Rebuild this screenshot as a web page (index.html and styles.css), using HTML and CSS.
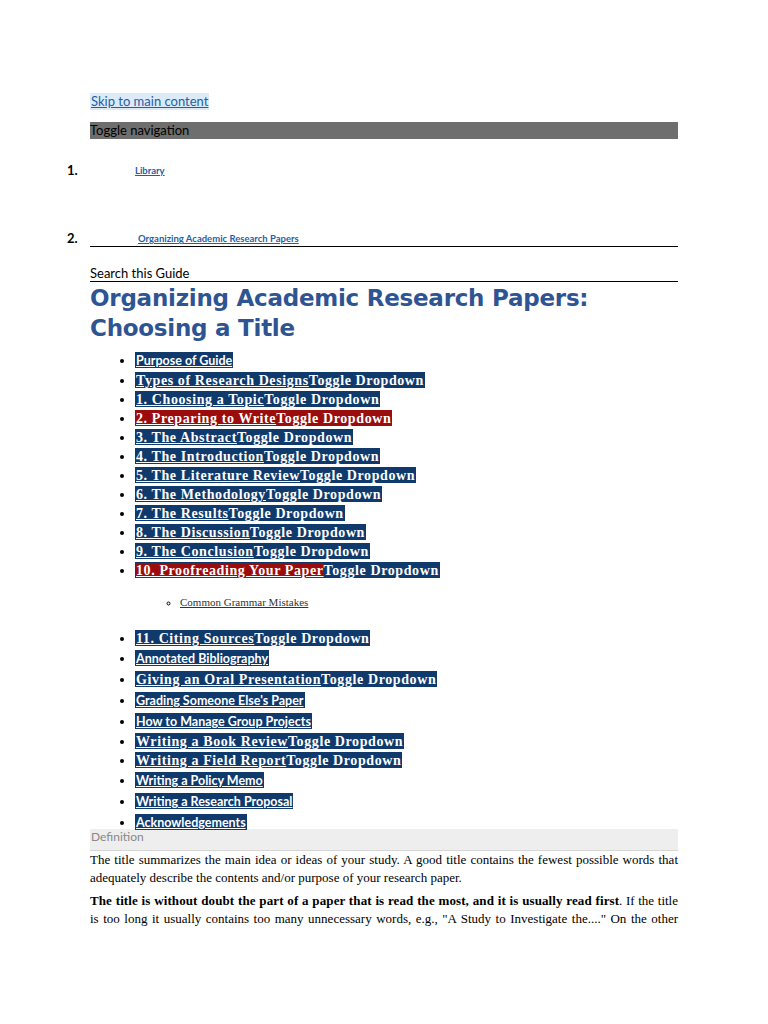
FILE: index.html
```html
<!DOCTYPE html>
<html lang="en">
<head>
    <meta charset="UTF-8">
    <title>Organizing Academic Research Papers: Choosing a Title</title>
    <link rel="stylesheet" href="styles.css">
</head>
<body>
    <div class="page">
        <a class="skip-link" href="#main">Skip to main content</a>

        <div class="toggle-nav">Toggle navigation</div>

        <ol class="breadcrumb">
            <li><a href="#">Library</a></li>
            <li><a href="#">Organizing Academic Research Papers</a></li>
        </ol>

        <div class="search-guide">Search this Guide</div>

        <h1>Organizing Academic Research Papers: Choosing a Title</h1>

        <ul class="guide-nav">
            <li class="sans"><span class="hl"><a href="#">Purpose of Guide</a></span></li>
            <li><span class="hl"><a href="#">Types of Research Designs</a>Toggle Dropdown</span></li>
            <li><span class="hl"><a href="#">1. Choosing a Topic</a>Toggle Dropdown</span></li>
            <li class="active"><span class="hl"><a href="#">2. Preparing to Write</a>Toggle Dropdown</span></li>
            <li><span class="hl"><a href="#">3. The Abstract</a>Toggle Dropdown</span></li>
            <li><span class="hl"><a href="#">4. The Introduction</a>Toggle Dropdown</span></li>
            <li><span class="hl"><a href="#">5. The Literature Review</a>Toggle Dropdown</span></li>
            <li><span class="hl"><a href="#">6. The Methodology</a>Toggle Dropdown</span></li>
            <li><span class="hl"><a href="#">7. The Results</a>Toggle Dropdown</span></li>
            <li><span class="hl"><a href="#">8. The Discussion</a>Toggle Dropdown</span></li>
            <li><span class="hl"><a href="#">9. The Conclusion</a>Toggle Dropdown</span></li>
            <li class="current">
                <span class="hl"><a class="red" href="#">10. Proofreading Your Paper</a>Toggle Dropdown</span>
                <ul class="sub-nav">
                    <li><a href="#">Common Grammar Mistakes</a></li>
                </ul>
            </li>
            <li><span class="hl"><a href="#">11. Citing Sources</a>Toggle Dropdown</span></li>
            <li class="sans"><span class="hl"><a href="#">Annotated Bibliography</a></span></li>
            <li class="tall"><span class="hl"><a href="#">Giving an Oral Presentation</a>Toggle Dropdown</span></li>
            <li class="sans"><span class="hl"><a href="#">Grading Someone Else's Paper</a></span></li>
            <li class="sans"><span class="hl"><a href="#">How to Manage Group Projects</a></span></li>
            <li><span class="hl"><a href="#">Writing a Book Review</a>Toggle Dropdown</span></li>
            <li><span class="hl"><a href="#">Writing a Field Report</a>Toggle Dropdown</span></li>
            <li class="sans"><span class="hl"><a href="#">Writing a Policy Memo</a></span></li>
            <li class="sans"><span class="hl"><a href="#">Writing a Research Proposal</a></span></li>
            <li class="sans"><span class="hl"><a href="#">Acknowledgements</a></span></li>
        </ul>

        <div id="main" class="panel-heading">Definition</div>

        <div class="panel-body">
            <p>The title summarizes the main idea or ideas of your study. A good title contains the fewest possible words that adequately describe the contents and/or purpose of your research paper.</p>
            <p class="cut"><strong>The title is without doubt the part of a paper that is read the most, and it is usually read first</strong>. If the title is too long it usually contains too many unnecessary words, e.g., "A Study to Investigate the...." On the other</p>
        </div>
    </div>
</body>
</html>
```

FILE: styles.css
```css
:root {
    --navy: #103a6c;
    --red: #9b0c0c;
    --link: #1f5fa8;
    --title: #2e5492;
    --sans: 'Lato', 'Open Sans', Arial, sans-serif;
    --serif: 'Liberation Serif', 'Times New Roman', serif;
}

* {
    box-sizing: border-box;
}

body {
    margin: 0;
    background: #ffffff;
    color: #000000;
    font-family: var(--sans);
}

.page {
    width: 588px;
    margin-left: 90px;
    padding-top: 90px;
}

.skip-link {
    display: inline-block;
    background-color: #dcebf7;
    color: var(--link);
    font-size: 13px;
    line-height: 17px;
    padding: 0 1px;
}

.toggle-nav {
    margin-top: 12px;
    background-color: #6e6e6e;
    font-size: 13px;
    line-height: 17px;
    height: 17px;
}

.breadcrumb {
    margin: 24px 0 0 0;
    padding: 0;
    list-style: none;
    counter-reset: crumb;
}

.breadcrumb li {
    counter-increment: crumb;
    position: relative;
    height: 68px;
    padding-left: 45px;
    font-size: 9.5px;
    font-weight: bold;
    line-height: 16px;
}

.breadcrumb li::before {
    content: counter(crumb) ".";
    position: absolute;
    left: -23px;
    top: -1px;
    font-size: 13px;
}

.breadcrumb li:last-child {
    height: 16px;
    padding-left: 48px;
    border-bottom: 1px solid #000000;
}

.breadcrumb a {
    color: var(--link);
}

.search-guide {
    margin-top: 18px;
    font-size: 13px;
    line-height: 16px;
    border-bottom: 1px solid #000000;
}

h1 {
    margin: 1px 0 7px;
    font-family: 'DejaVu Sans', Verdana, sans-serif;
    font-weight: bold;
    font-size: 23px;
    line-height: 30px;
    letter-spacing: -0.25px;
    color: var(--title);
}

.guide-nav {
    margin: 0;
    padding-left: 45px;
    list-style: disc;
    font-family: var(--serif);
    font-weight: bold;
    font-size: 14px;
    line-height: 19px;
}

.guide-nav > li {
    letter-spacing: 0.6px;
}

.guide-nav .hl {
    background-color: var(--navy);
    color: #ffffff;
    padding: 1px 1px 0 1px;
}

.guide-nav a {
    color: #ffffff;
}

.guide-nav .active .hl {
    background-color: var(--red);
}

.guide-nav a.red {
    background-color: var(--red);
}

.guide-nav .sans {
    font-family: var(--sans);
    font-size: 12.5px;
    line-height: 21px;
    letter-spacing: 0;
}

.guide-nav .tall {
    line-height: 21px;
}

.guide-nav .current {
    margin-bottom: 17px;
}

.sub-nav {
    margin: 13px 0 0 0;
    padding-left: 45px;
    list-style: circle;
    font-weight: normal;
    font-size: 11px;
    letter-spacing: 0;
}

.sub-nav a {
    color: #333333;
}

.panel-heading {
    margin-top: -4px;
    background-color: #eeeeee;
    border-bottom: 1px solid #d6d6d6;
    color: #888888;
    font-size: 12px;
    line-height: 16px;
    padding: 0 0 5px 1px;
}

.panel-body {
    font-family: var(--serif);
    font-size: 13px;
    line-height: 18px;
    text-align: justify;
}

.panel-body strong {
    letter-spacing: 0.1px;
}

.panel-body p {
    margin: 0 0 5px;
}

.panel-body .cut {
    text-align-last: justify;
}
```
